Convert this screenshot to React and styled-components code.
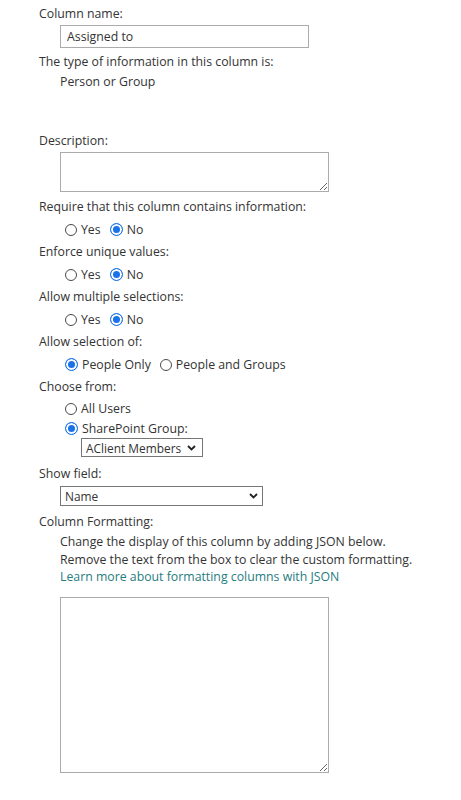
import React from "react";
import styled, { createGlobalStyle } from "styled-components";

const GlobalStyle = createGlobalStyle`
  body {
    margin: 0;
    background: #ffffff;
    font-family: "Open Sans", "Noto Sans", sans-serif;
    font-size: 12.3px;
    color: #333333;
  }
`;

const Form = styled.div`
  padding: 3px 0 0 39px;
`;

const Field = styled.div`
  margin-bottom: ${(p) => p.$gap || 0}px;
`;

const Label = styled.div`
  line-height: 22px;
`;

const StaticText = styled.div`
  line-height: 20px;
  padding-left: ${(p) => (p.$indent ? 21 : 0)}px;
`;

const Indent = styled.div`
  padding-left: 21px;
  margin-top: ${(p) => p.$top || 0}px;
`;

const TextInput = styled.input`
  box-sizing: border-box;
  width: 249px;
  height: 23px;
  border: 1px solid #ababab;
  padding: 0 6px;
  font: inherit;
  color: #333333;
  outline: none;
  display: block;
`;

const TextArea = styled.textarea`
  box-sizing: border-box;
  display: block;
  width: 269px;
  height: ${(p) => p.$h}px;
  border: 1px solid #ababab;
  margin: 0;
  padding: 4px 6px;
  font: inherit;
  resize: both;
  outline: none;
`;

const RadioRow = styled.div`
  display: flex;
  align-items: center;
  height: ${(p) => p.$h || 23}px;
  padding-left: 26px;
`;

const Option = styled.label`
  display: inline-flex;
  align-items: center;
  gap: 4px;
  margin-right: 9px;
  white-space: nowrap;
`;

const Radio = styled.input.attrs({ type: "radio" })`
  appearance: none;
  width: 12px;
  height: 12px;
  margin: 0;
  border-radius: 50%;
  border: 1px solid #4a4a4a;
  background: #ffffff;
  box-sizing: border-box;
  flex: none;

  &:checked {
    width: 13px;
    height: 13px;
    border-color: #1a73e8;
    background: #1a73e8;
    box-shadow: inset 0 0 0 2px #ffffff;
  }
`;

const SelectWrap = styled.div`
  position: relative;
  display: inline-block;
  margin-left: ${(p) => p.$left || 0}px;
  margin-top: ${(p) => p.$top || 0}px;
  vertical-align: top;
`;

const Select = styled.select`
  appearance: none;
  box-sizing: border-box;
  display: block;
  width: ${(p) => p.$w}px;
  height: ${(p) => p.$h}px;
  border: 1px solid #767676;
  border-radius: 0;
  background: #ffffff;
  padding: 0 0 0 4px;
  font: inherit;
  font-size: 11.9px;
  color: #333333;
  outline: none;
`;

const Chevron = styled.svg`
  position: absolute;
  right: ${(p) => p.$right}px;
  top: 50%;
  transform: translateY(-50%);
  pointer-events: none;
`;

const Help = styled.div`
  padding-left: 21px;
  line-height: 17.5px;
`;

const HelpLink = styled.a`
  color: #1f7c80;
  text-decoration: none;
`;

const ChevronIcon = ({ right }) => (
  <Chevron $right={right} width="9" height="6" viewBox="0 0 9 6">
    <path d="M1 1 L4.5 4.5 L8 1" fill="none" stroke="#222" strokeWidth="1.8" />
  </Chevron>
);

const YesNo = ({ name }) => (
  <RadioRow>
    <Option>
      <Radio name={name} />
      Yes
    </Option>
    <Option>
      <Radio name={name} defaultChecked />
      No
    </Option>
  </RadioRow>
);

const App = () => (
  <>
    <GlobalStyle />
    <Form>
      <Field $gap={4}>
        <Label>Column name:</Label>
        <Indent>
          <TextInput defaultValue="Assigned to" />
        </Indent>
      </Field>

      <Field $gap={38}>
        <StaticText>The type of information in this column is:</StaticText>
        <StaticText $indent>Person or Group</StaticText>
      </Field>

      <Field $gap={4}>
        <Label>Description:</Label>
        <Indent>
          <TextArea $h={40} />
        </Indent>
      </Field>

      <Field>
        <Label>Require that this column contains information:</Label>
        <YesNo name="required" />
      </Field>

      <Field>
        <Label>Enforce unique values:</Label>
        <YesNo name="unique" />
      </Field>

      <Field>
        <Label>Allow multiple selections:</Label>
        <YesNo name="multi" />
      </Field>

      <Field>
        <Label>Allow selection of:</Label>
        <RadioRow>
          <Option>
            <Radio name="selection" defaultChecked />
            People Only
          </Option>
          <Option>
            <Radio name="selection" />
            People and Groups
          </Option>
        </RadioRow>
      </Field>

      <Field $gap={6}>
        <Label>Choose from:</Label>
        <RadioRow $h={21}>
          <Option>
            <Radio name="choose" />
            All Users
          </Option>
        </RadioRow>
        <RadioRow $h={19}>
          <Option>
            <Radio name="choose" defaultChecked />
            SharePoint Group:
          </Option>
        </RadioRow>
        <SelectWrap $left={42}>
          <Select $w={122} $h={19} defaultValue="AClient Members">
            <option>AClient Members</option>
            <option>AClient Owners</option>
            <option>AClient Visitors</option>
          </Select>
          <ChevronIcon right={7} />
        </SelectWrap>
      </Field>

      <Field $gap={5}>
        <Label>Show field:</Label>
        <SelectWrap $left={21} $top={1}>
          <Select $w={203} $h={20} defaultValue="Name">
            <option>Name</option>
            <option>Account</option>
            <option>Work email</option>
          </Select>
          <ChevronIcon right={5} />
        </SelectWrap>
      </Field>

      <Field>
        <Label>Column Formatting:</Label>
        <Help>
          Change the display of this column by adding JSON below.
          <br />
          Remove the text from the box to clear the custom formatting.
          <br />
          <HelpLink href="#">Learn more about formatting columns with JSON</HelpLink>
        </Help>
        <Indent $top={11}>
          <TextArea $h={176} />
        </Indent>
      </Field>
    </Form>
  </>
);

export default App;
